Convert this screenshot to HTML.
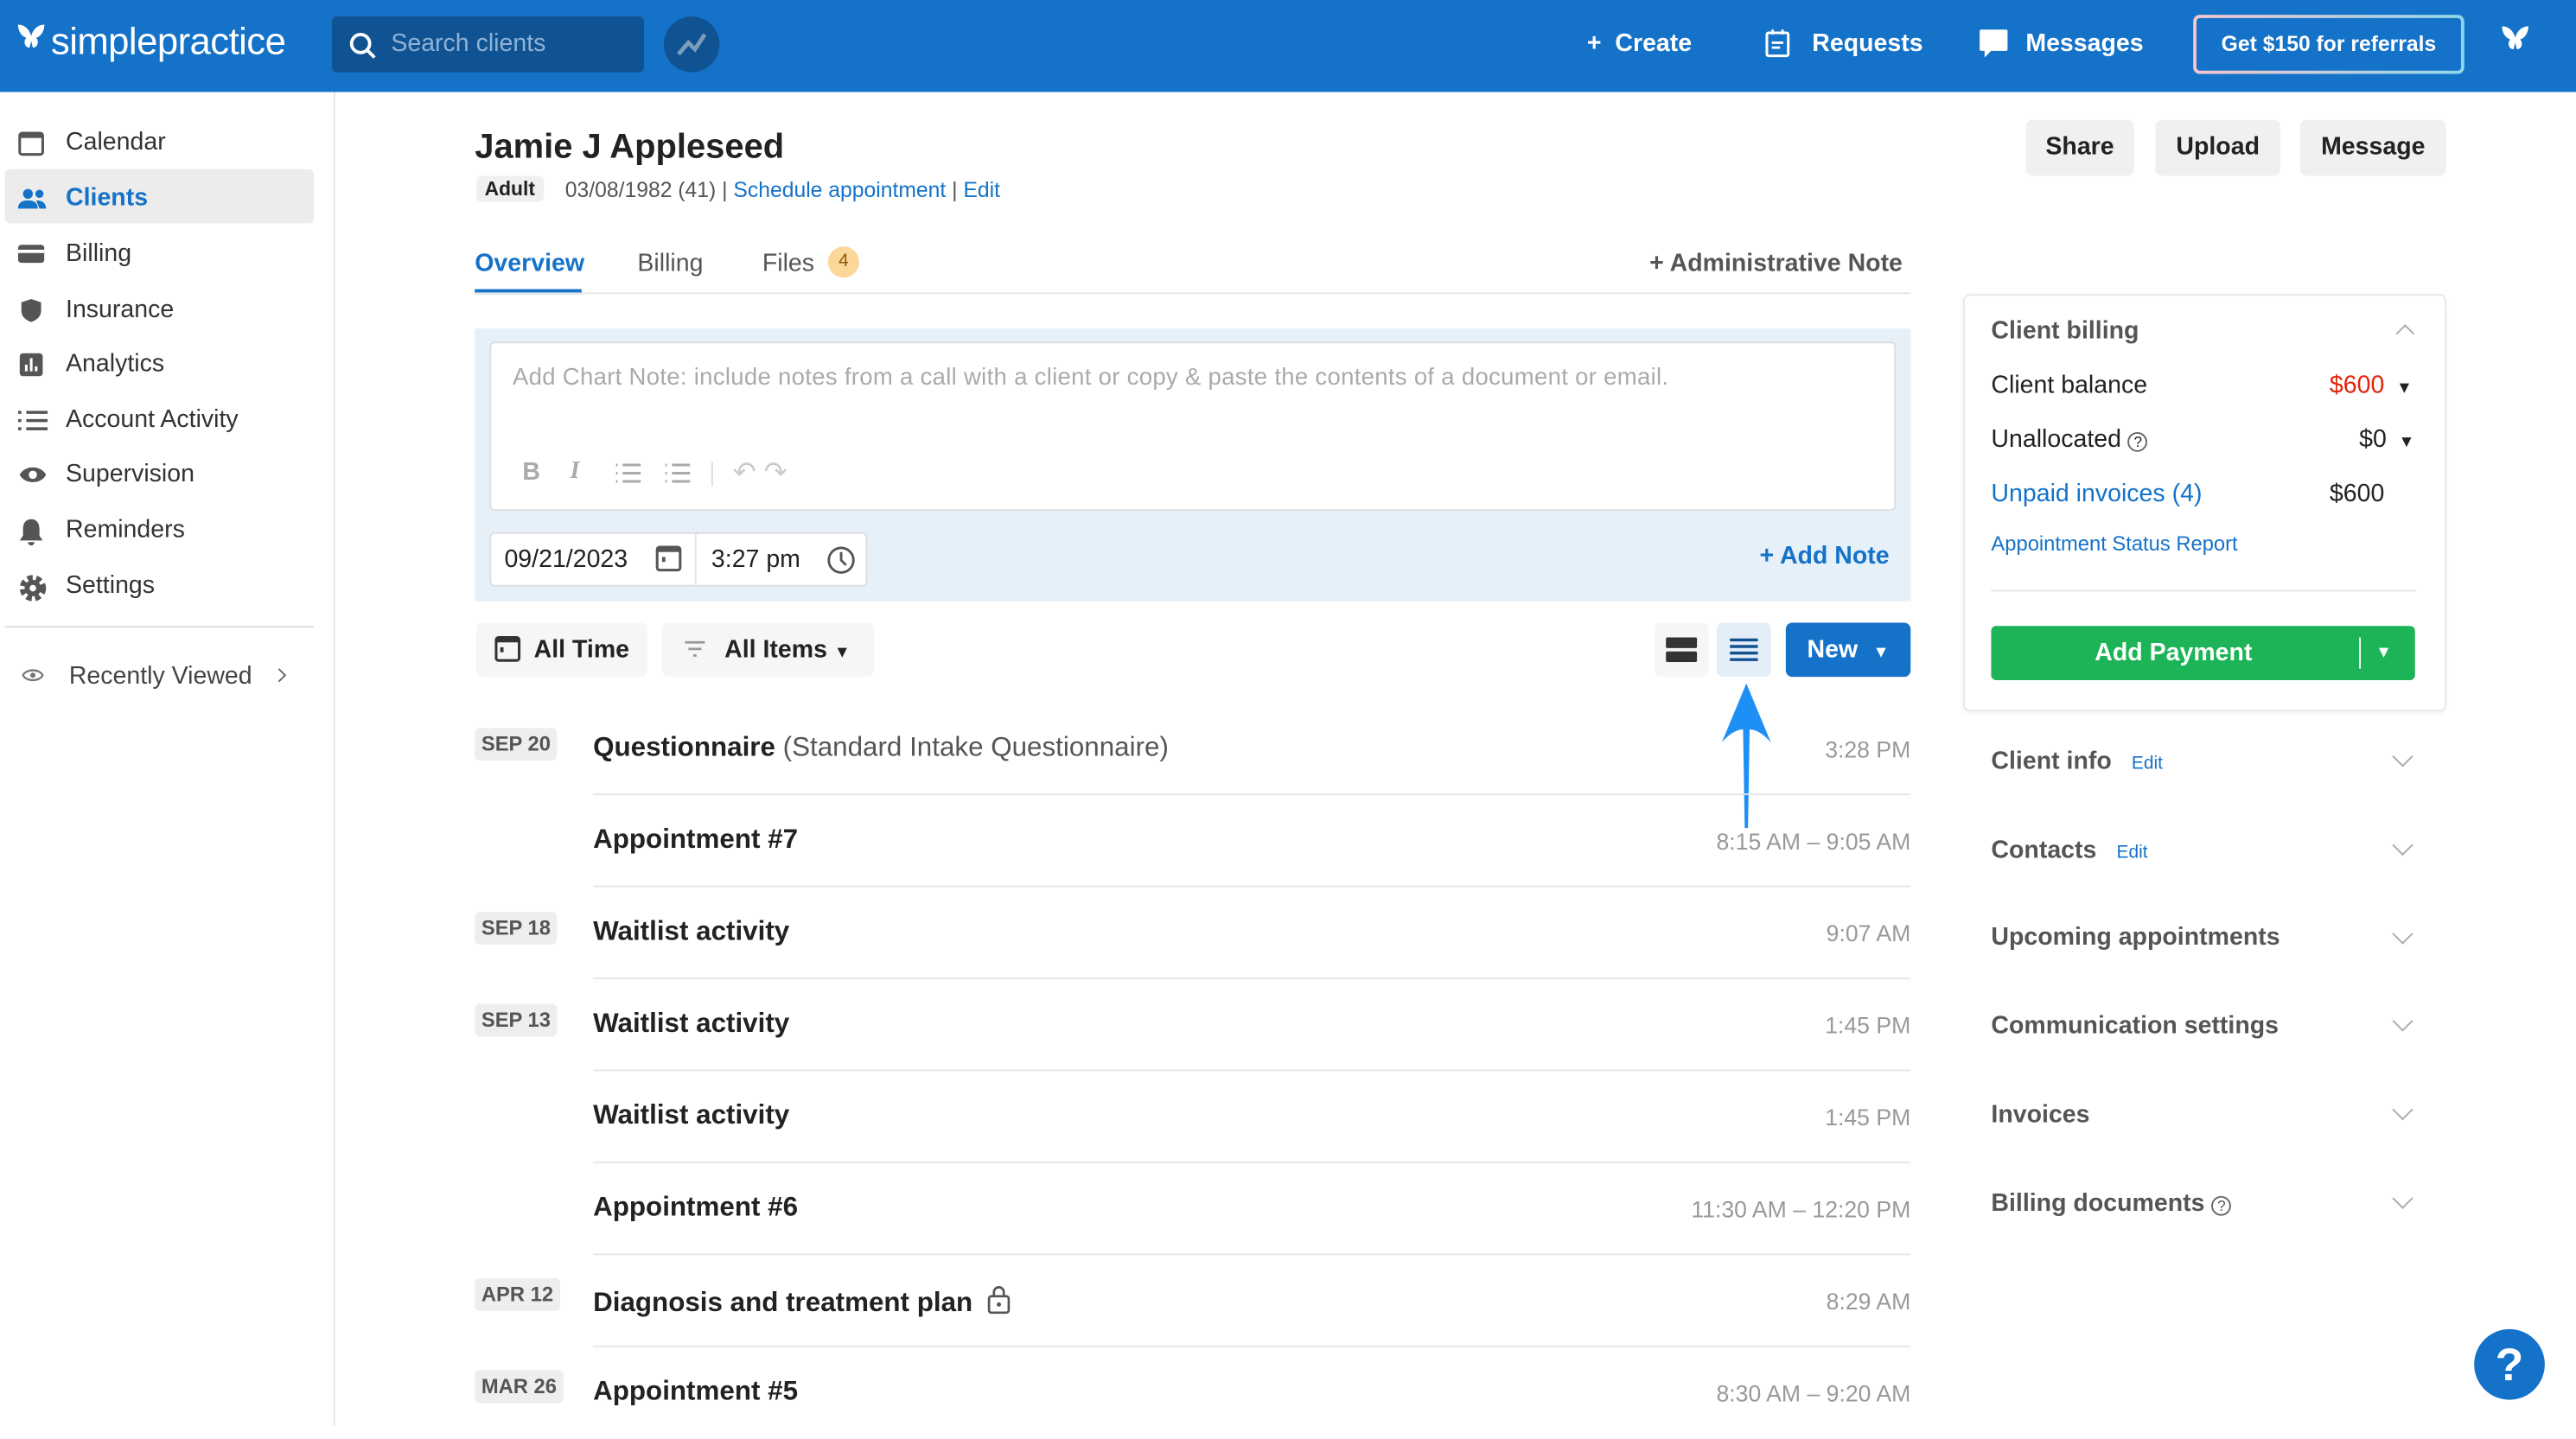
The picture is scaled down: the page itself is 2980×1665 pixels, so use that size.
<!DOCTYPE html>
<html><head><meta charset="utf-8">
<style>
*{box-sizing:border-box;margin:0;padding:0}
html,body{width:2980px;height:1650px;overflow:hidden;background:#fff}
#w{position:absolute;left:0;top:0;width:1568px;height:868px;transform:scale(1.90051,1.90092);transform-origin:0 0;font-family:"Liberation Sans",sans-serif;color:#222;font-size:15px}
.a{position:absolute}
.hdr{left:0;top:0;width:1568px;height:56px;background:#1572c9}
.hdr .t{color:#fff;font-weight:bold;font-size:15px}
.nav div{position:absolute;left:40px;font-size:15px;color:#333}
.nav svg{position:absolute;left:-29px;top:1px}
.row{position:absolute;left:361px;width:802px;height:56px;border-bottom:1px solid #e6e6e6}
.row .ti{position:absolute;left:0;top:18px;font-size:16.5px;font-weight:bold;color:#222}
.row .tm{position:absolute;right:0;top:20px;font-size:14px;color:#999}
.dt{position:absolute;left:289px;background:#eee;border-radius:3px;font-size:12.5px;font-weight:bold;color:#555;padding:3px 4px}
.sec{position:absolute;left:1212px;font-size:15px;font-weight:bold;color:#555}
.chev{position:absolute;left:1458px;width:9px;height:9px;border-right:1.5px solid #aaa;border-bottom:1.5px solid #aaa;transform:rotate(45deg)}
.btn{position:absolute;background:#f0f0f0;border-radius:4px;font-weight:bold;font-size:15px;text-align:center;line-height:34px;color:#222}
</style></head><body><div id="w">
<div class="a hdr"></div>
<svg class="a" style="left:10px;top:14px" width="22" height="18" viewBox="0 0 22 18"><path d="M1 1c4 0 7 3 8 7c1-4 4-7 8-7c0 4-2 7-5 8c2 2 1 6-2 6l-1-4l-1 4c-3 0-4-4-2-6C3 8 1 5 1 1z" fill="#fff"/></svg>
<div class="a" style="left:31px;top:12px;font-size:23px;color:#fff;letter-spacing:-0.3px"><span>simple</span>practice</div>
<div class="a" style="left:202px;top:10px;width:190px;height:34px;background:#105392;border-radius:3px"></div>
<svg class="a" style="left:212px;top:19px" width="18" height="18"><circle cx="7.5" cy="7.5" r="5.5" stroke="#fff" stroke-width="2" fill="none"/><path d="M11 11l5 5" stroke="#fff" stroke-width="2"/></svg>
<div class="a" style="left:238px;top:18px;color:#8fb2d6;font-size:15px">Search clients</div>
<div class="a" style="left:404px;top:10px;width:34px;height:34px;border-radius:50%;background:#105392"></div>
<svg class="a" style="left:411px;top:18px" width="20" height="18"><path d="M2 15l6-7l4 4l6-9" stroke="#7d9dbc" stroke-width="2.5" fill="none"/></svg>
<div class="a t" style="left:966px;top:18px;color:#fff;font-weight:bold">+&nbsp; Create</div>
<svg class="a" style="left:1074px;top:17px" width="16" height="19"><rect x="1.5" y="3" width="13" height="14" rx="1" stroke="#fff" stroke-width="1.6" fill="none"/><path d="M5 1v3M11 1v3M4.5 9h7M4.5 12h5" stroke="#fff" stroke-width="1.5"/></svg>
<div class="a" style="left:1103px;top:18px;color:#fff;font-weight:bold">Requests</div>
<svg class="a" style="left:1204px;top:17px" width="19" height="20"><path d="M2 1h15a1 1 0 0 1 1 1v11a1 1 0 0 1-1 1H8l-4 4v-4H2a1 1 0 0 1-1-1V2a1 1 0 0 1 1-1z" fill="#fff"/></svg>
<div class="a" style="left:1233px;top:18px;color:#fff;font-weight:bold">Messages</div>
<div class="a" style="left:1335px;top:9px;width:165px;height:36px;border-radius:4px;padding:2px;background:linear-gradient(90deg,#f7c6cc,#8fd6ea)"><div style="background:#1572c9;width:100%;height:100%;border-radius:2px;color:#fff;font-weight:bold;font-size:13px;text-align:center;line-height:32px">Get $150 for referrals</div></div>
<svg class="a" style="left:1522px;top:15px" width="22" height="18" viewBox="0 0 22 18"><path d="M1 1c4 0 7 3 8 7c1-4 4-7 8-7c0 4-2 7-5 8c2 2 1 6-2 6l-1-4l-1 4c-3 0-4-4-2-6C3 8 1 5 1 1z" fill="#fff"/></svg>

<div class="a" style="left:203px;top:56px;width:1px;height:812px;background:#e5e5e5"></div>
<div class="a" style="left:3px;top:103px;width:188px;height:33px;background:#ececec;border-radius:3px"></div>
<div class="nav">
<div style="top:78px"><svg width="16" height="16"><rect x="1" y="2" width="14" height="13" rx="1.5" fill="none" stroke="#555" stroke-width="1.6"/><rect x="1" y="2" width="14" height="3" fill="#555"/></svg>Calendar</div>
<div style="top:112px;color:#1572c9;font-weight:bold"><svg width="18" height="16"><circle cx="6" cy="5" r="3" fill="#1572c9"/><circle cx="13" cy="5" r="2.5" fill="#1572c9"/><path d="M0 14c0-4 3-5 6-5s6 1 6 5zM11 9c3 0 6 1 6 5h-4" fill="#1572c9"/></svg>Clients</div>
<div style="top:146px"><svg width="16" height="16"><rect x="0" y="2" width="16" height="11" rx="2" fill="#555"/><rect x="0" y="5" width="16" height="2" fill="#fff"/></svg>Billing</div>
<div style="top:180px"><svg width="16" height="16"><path d="M8 1l6 2v5c0 4-3 6-6 7c-3-1-6-3-6-7V3z" fill="#555"/></svg>Insurance</div>
<div style="top:213px"><svg width="16" height="16"><rect x="1" y="1" width="14" height="14" rx="2" fill="#555"/><path d="M5 12V8M8 12V4M11 12V9" stroke="#fff" stroke-width="1.6"/></svg>Analytics</div>
<div style="top:247px"><svg width="18" height="16"><path d="M0 3h2M0 8h2M0 13h2M5 3h13M5 8h13M5 13h13" stroke="#555" stroke-width="1.8"/></svg>Account Activity</div>
<div style="top:280px"><svg width="18" height="16"><path d="M1 8c3-6 13-6 16 0c-3 6-13 6-16 0z" fill="#555"/><circle cx="9" cy="8" r="2.5" fill="#fff"/></svg>Supervision</div>
<div style="top:314px"><svg width="16" height="18"><path d="M8 1c3 0 5 2 5 6v4l2 3H1l2-3V7c0-4 2-6 5-6zM6 15h4a2 2 0 0 1-4 0z" fill="#555"/></svg>Reminders</div>
<div style="top:348px"><svg width="18" height="18"><circle cx="9" cy="9" r="6" fill="none" stroke="#555" stroke-width="4" stroke-dasharray="3 2"/><circle cx="9" cy="9" r="5" fill="#555"/><circle cx="9" cy="9" r="2" fill="#fff"/></svg>Settings</div>
</div>
<div class="a" style="left:3px;top:381px;width:188px;height:1px;background:#ddd"></div>
<svg class="a" style="left:13px;top:406px" width="14" height="10"><path d="M1 5c2-4 10-4 12 0c-2 4-10 4-12 0z" fill="none" stroke="#777" stroke-width="1.2"/><circle cx="7" cy="5" r="1.6" fill="#777"/></svg>
<div class="a" style="left:42px;top:403px;color:#444">Recently Viewed</div>
<div class="a" style="left:167px;top:408px;width:6px;height:6px;border-right:1.5px solid #666;border-top:1.5px solid #666;transform:rotate(45deg)"></div>

<div class="a" style="left:289px;top:78px;font-size:21px;font-weight:bold;color:#222">Jamie J Appleseed</div>
<div class="a" style="left:290px;top:107px;background:#f0f0f0;padding:1px 5px;font-size:12px;font-weight:bold;border-radius:3px">Adult</div>
<div class="a" style="left:344px;top:108px;font-size:13px;color:#555">03/08/1982 (41) | <span style="color:#1572c9">Schedule appointment</span> | <span style="color:#1572c9">Edit</span></div>
<div class="btn" style="left:1233px;top:73px;width:66px">Share</div>
<div class="btn" style="left:1312px;top:73px;width:76px">Upload</div>
<div class="btn" style="left:1400px;top:73px;width:89px">Message</div>

<div class="a" style="left:289px;top:152px;color:#1572c9;font-weight:bold;font-size:15px">Overview</div>
<div class="a" style="left:289px;top:176px;width:65px;height:3px;background:#1572c9"></div>
<div class="a" style="left:388px;top:152px;color:#555;font-size:15px">Billing</div>
<div class="a" style="left:464px;top:152px;color:#555;font-size:15px">Files</div>
<div class="a" style="left:504px;top:150px;width:19px;height:19px;border-radius:50%;background:#fbd79a;font-size:11px;text-align:center;line-height:19px;color:#8a5a00">4</div>
<div class="a" style="left:1004px;top:152px;color:#555;font-weight:bold;font-size:15px">+ Administrative Note</div>
<div class="a" style="left:289px;top:178px;width:874px;height:1px;background:#e5e5e5"></div>

<div class="a" style="left:289px;top:200px;width:874px;height:166px;background:#e6f0f9"></div>
<div class="a" style="left:298px;top:208px;width:856px;height:103px;background:#fff;border:1px solid #ddd;border-radius:3px"></div>
<div class="a" style="left:312px;top:222px;color:#aaa;font-size:14.5px;letter-spacing:0.15px">Add Chart Note: include notes from a call with a client or copy &amp; paste the contents of a document or email.</div>
<div class="a" style="left:318px;top:279px;color:#aaa;font-size:15px;font-weight:bold">B</div>
<div class="a" style="left:347px;top:279px;color:#aaa;font-size:15px;font-style:italic;font-family:'Liberation Serif',serif;font-weight:bold">I</div>
<svg class="a" style="left:374px;top:281px" width="50" height="14"><path d="M1 2h1M1 7h1M1 12h1M5 2h11M5 7h11M5 12h11M31 2h1M31 7h1M31 12h1M35 2h11M35 7h11M35 12h11" stroke="#aaa" stroke-width="1.6"/></svg>
<div class="a" style="left:433px;top:281px;width:1px;height:15px;background:#ddd"></div>
<div class="a" style="left:446px;top:278px;color:#ccc;font-size:17px">↶ ↷</div>
<div class="a" style="left:298px;top:324px;width:230px;height:33px;background:#fff;border:1px solid #ddd;border-radius:3px"></div>
<div class="a" style="left:423px;top:325px;width:1px;height:31px;background:#e5e5e5"></div>
<div class="a" style="left:307px;top:332px;font-size:15px;color:#222">09/21/2023</div>
<svg class="a" style="left:399px;top:332px" width="16" height="16"><rect x="1" y="1" width="14" height="14" rx="1.5" fill="none" stroke="#555" stroke-width="1.6"/><rect x="1" y="1" width="14" height="3" fill="#555"/><rect x="4" y="7" width="2" height="3" fill="#555"/></svg>
<div class="a" style="left:433px;top:332px;font-size:15px;color:#222">3:27 pm</div>
<svg class="a" style="left:503px;top:332px" width="18" height="18"><circle cx="9" cy="9" r="7.5" fill="none" stroke="#555" stroke-width="1.5"/><path d="M9 4v5l3 3" stroke="#555" stroke-width="1.5" fill="none"/></svg>
<div class="a" style="left:1071px;top:330px;color:#1572c9;font-weight:bold;font-size:15px">+ Add Note</div>

<div class="btn" style="left:290px;top:379px;width:104px;height:33px;background:#f6f6f6;text-align:left;padding-left:35px;line-height:33px">All Time</div>
<svg class="a" style="left:301px;top:387px" width="16" height="16"><rect x="1" y="1" width="14" height="14" rx="1.5" fill="none" stroke="#333" stroke-width="1.6"/><rect x="1" y="1" width="14" height="3" fill="#333"/><rect x="3.5" y="7" width="2" height="3" fill="#333"/></svg>
<div class="btn" style="left:403px;top:379px;width:129px;height:33px;background:#f6f6f6;text-align:left;padding-left:38px;line-height:33px">All Items <span style="font-size:10px">▼</span></div>
<svg class="a" style="left:416px;top:389px" width="14" height="12"><path d="M1 2h12M3 6h8M6 10h2" stroke="#999" stroke-width="1.5"/></svg>
<div class="a" style="left:1007px;top:379px;width:33px;height:33px;background:#f6f6f6;border-radius:4px"></div>
<svg class="a" style="left:1014px;top:388px" width="19" height="15"><rect x="0" y="0" width="19" height="6.5" rx="1" fill="#333"/><rect x="0" y="8.5" width="19" height="6.5" rx="1" fill="#333"/></svg>
<div class="a" style="left:1045px;top:379px;width:33px;height:33px;background:#e3eef9;border-radius:4px"></div>
<svg class="a" style="left:1052px;top:388px" width="19" height="15"><path d="M1 1.5h17M1 5.5h17M1 9.5h17M1 13.5h17" stroke="#12508f" stroke-width="1.8"/></svg>
<div class="a" style="left:1087px;top:379px;width:76px;height:33px;background:#1572c9;border-radius:4px;color:#fff;font-weight:bold;line-height:33px;padding-left:13px">New <span style="font-size:10px;margin-left:5px">▼</span></div>
<svg class="a" style="left:1045px;top:414px" width="36" height="92"><path d="M18 2L3 38C8 32 13 30 16 30L17 90h2L20 30C23 30 28 32 33 38z" fill="#1e90f5"/></svg>

<div class="dt" style="top:443px">SEP 20</div>
<div class="row" style="top:428px"><div class="ti">Questionnaire <span style="font-weight:normal;color:#555">(Standard Intake Questionnaire)</span></div><div class="tm">3:28 PM</div></div>
<div class="row" style="top:484px"><div class="ti">Appointment #7</div><div class="tm">8:15 AM – 9:05 AM</div></div>
<div class="dt" style="top:555px">SEP 18</div>
<div class="row" style="top:540px"><div class="ti">Waitlist activity</div><div class="tm">9:07 AM</div></div>
<div class="dt" style="top:611px">SEP 13</div>
<div class="row" style="top:596px"><div class="ti">Waitlist activity</div><div class="tm">1:45 PM</div></div>
<div class="row" style="top:652px"><div class="ti">Waitlist activity</div><div class="tm">1:45 PM</div></div>
<div class="row" style="top:708px"><div class="ti">Appointment #6</div><div class="tm">11:30 AM – 12:20 PM</div></div>
<div class="dt" style="top:778px">APR 12</div>
<div class="row" style="top:764px"><div class="ti">Diagnosis and treatment plan <svg width="16" height="18" style="vertical-align:-2px;margin-left:3px"><rect x="2" y="7" width="12" height="10" rx="1.5" fill="none" stroke="#555" stroke-width="1.4"/><path d="M5 7V4.5a3 3 0 0 1 6 0V7" fill="none" stroke="#555" stroke-width="1.4"/><circle cx="8" cy="12" r="1.3" fill="#555"/></svg></div><div class="tm">8:29 AM</div></div>
<div class="dt" style="top:834px">MAR 26</div>
<div class="row" style="top:820px;border:none"><div class="ti">Appointment #5</div><div class="tm">8:30 AM – 9:20 AM</div></div>

<div class="a" style="left:1195px;top:179px;width:294px;height:254px;border:1px solid #e8e8e8;border-radius:4px;box-shadow:0 1px 3px rgba(0,0,0,.06)"></div>
<div class="sec" style="top:193px">Client billing</div>
<div class="a" style="left:1460px;top:199px;width:8px;height:8px;border-left:1.5px solid #aaa;border-top:1.5px solid #aaa;transform:rotate(45deg)"></div>
<div class="a" style="left:1212px;top:226px">Client balance</div>
<div class="a" style="left:1418px;top:226px;color:#e0240b">$600 <span style="color:#222;font-size:10px;margin-left:3px">▼</span></div>
<div class="a" style="left:1212px;top:259px">Unallocated <span style="display:inline-block;width:12px;height:12px;border:1px solid #666;border-radius:50%;font-size:9px;text-align:center;line-height:11px;vertical-align:0">?</span></div>
<div class="a" style="left:1436px;top:259px">$0 <span style="font-size:10px;margin-left:3px">▼</span></div>
<div class="a" style="left:1212px;top:292px;color:#1572c9">Unpaid invoices (4)</div>
<div class="a" style="left:1418px;top:292px">$600</div>
<div class="a" style="left:1212px;top:324px;color:#1572c9;font-size:12.5px">Appointment Status Report</div>
<div class="a" style="left:1212px;top:359px;width:259px;height:1px;background:#e5e5e5"></div>
<div class="a" style="left:1212px;top:381px;width:258px;height:33px;background:#1cb456;border-radius:3px;color:#fff;font-weight:bold;text-align:center;line-height:33px;padding-right:36px">Add Payment</div>
<div class="a" style="left:1436px;top:388px;width:1px;height:19px;background:#fff"></div>
<div class="a" style="left:1446px;top:388px;color:#fff;font-size:10px;line-height:19px">▼</div>

<div class="sec" style="top:455px">Client info <span style="color:#1572c9;font-size:11px;font-weight:normal;margin-left:8px">Edit</span></div><div class="chev" style="top:456px"></div>
<div class="sec" style="top:509px">Contacts <span style="color:#1572c9;font-size:11px;font-weight:normal;margin-left:8px">Edit</span></div><div class="chev" style="top:510px"></div>
<div class="sec" style="top:562px">Upcoming appointments</div><div class="chev" style="top:564px"></div>
<div class="sec" style="top:616px">Communication settings</div><div class="chev" style="top:617px"></div>
<div class="sec" style="top:670px">Invoices</div><div class="chev" style="top:671px"></div>
<div class="sec" style="top:724px">Billing documents <span style="display:inline-block;width:12px;height:12px;border:1px solid #666;border-radius:50%;font-size:9px;text-align:center;line-height:11px;font-weight:normal">?</span></div><div class="chev" style="top:725px"></div>

<div class="a" style="left:1506px;top:809px;width:43px;height:43px;border-radius:50%;background:#1572c9;color:#fff;font-weight:bold;font-size:28px;text-align:center;line-height:43px">?</div>
</div></body></html>
